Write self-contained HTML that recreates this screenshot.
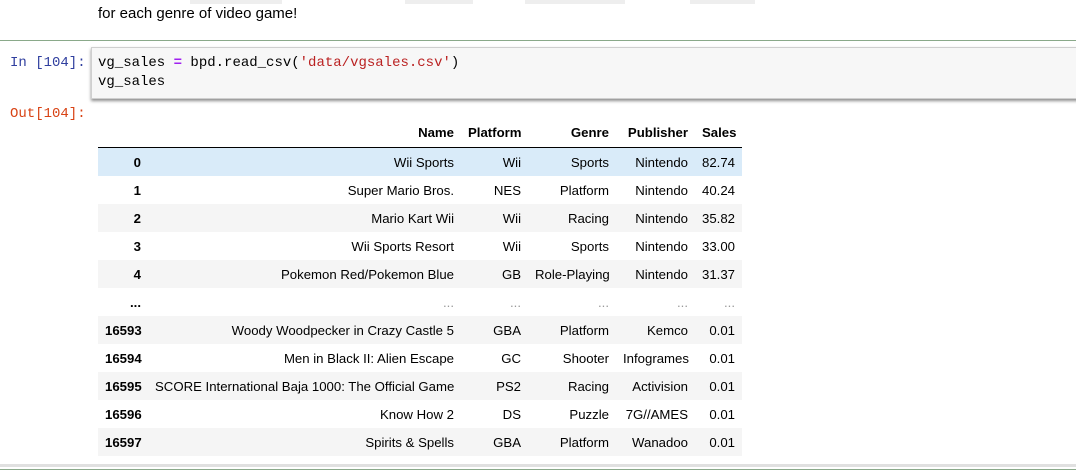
<!DOCTYPE html>
<html><head><style>
body{margin:0;width:1076px;height:476px;background:#fff;position:relative;overflow:hidden;font-family:"Liberation Sans",Arial,sans-serif;}
.abs{position:absolute}
.mono{font-family:"Liberation Mono",monospace;font-size:14px}
table{position:absolute;left:98px;top:118px;width:644px;border-collapse:collapse;font-size:13.2px;color:#000;table-layout:fixed}
td,th{text-align:right;padding:0 7px;height:28px;white-space:nowrap;overflow:visible}
thead th{height:29px;border-bottom:1px solid #000}
tbody tr:nth-child(odd){background:#f5f5f5}
tbody tr.sel{background:#d9ebf9}
.ell{color:#999}
</style></head><body>
<div class="abs" style="left:190px;top:0;width:92px;height:4px;background:#eee"></div>
<div class="abs" style="left:405px;top:0;width:68px;height:4px;background:#eee"></div>
<div class="abs" style="left:525px;top:0;width:100px;height:4px;background:#eee"></div>
<div class="abs" style="left:690px;top:0;width:65px;height:4px;background:#eee"></div>
<div class="abs" style="left:98px;top:5px;font-size:15px;color:#000">for each genre of video game!</div>
<div class="abs" style="left:0;top:40px;width:1076px;height:1px;background:#8aa98a"></div>
<div class="abs mono" style="left:10px;top:55px;color:#303F9F">In [104]:</div>
<div class="abs" style="left:91px;top:47px;width:990px;height:50px;background:#f7f7f7;border:1px solid #cfcfcf;box-shadow:0 2px 3px rgba(0,0,0,.45)"></div>
<div class="abs mono" style="left:98px;top:54px;line-height:19px;color:#000">vg_sales <span style="color:#a020f0;font-weight:bold">=</span> bpd.read_csv(<span style="color:#ba2121">'data/vgsales.csv'</span>)<br>vg_sales</div>
<div class="abs mono" style="left:10px;top:106px;color:#D84315">Out[104]:</div>
<table>
<colgroup><col style="width:50px"><col style="width:313px"><col style="width:67px"><col style="width:88px"><col style="width:79px"><col style="width:47px"></colgroup>
<thead><tr><th></th><th>Name</th><th>Platform</th><th>Genre</th><th>Publisher</th><th>Sales</th></tr></thead>
<tbody>
<tr class="sel"><th>0</th><td>Wii Sports</td><td>Wii</td><td>Sports</td><td>Nintendo</td><td>82.74</td></tr>
<tr style="background:#fff"><th>1</th><td>Super Mario Bros.</td><td>NES</td><td>Platform</td><td>Nintendo</td><td>40.24</td></tr>
<tr><th>2</th><td>Mario Kart Wii</td><td>Wii</td><td>Racing</td><td>Nintendo</td><td>35.82</td></tr>
<tr style="background:#fff"><th>3</th><td>Wii Sports Resort</td><td>Wii</td><td>Sports</td><td>Nintendo</td><td>33.00</td></tr>
<tr><th>4</th><td>Pokemon Red/Pokemon Blue</td><td>GB</td><td>Role-Playing</td><td>Nintendo</td><td>31.37</td></tr>
<tr style="background:#fff"><th>...</th><td class="ell">...</td><td class="ell">...</td><td class="ell">...</td><td class="ell">...</td><td class="ell">...</td></tr>
<tr><th>16593</th><td>Woody Woodpecker in Crazy Castle 5</td><td>GBA</td><td>Platform</td><td>Kemco</td><td>0.01</td></tr>
<tr style="background:#fff"><th>16594</th><td>Men in Black II: Alien Escape</td><td>GC</td><td>Shooter</td><td>Infogrames</td><td>0.01</td></tr>
<tr><th>16595</th><td>SCORE International Baja 1000: The Official Game</td><td>PS2</td><td>Racing</td><td>Activision</td><td>0.01</td></tr>
<tr style="background:#fff"><th>16596</th><td>Know How 2</td><td>DS</td><td>Puzzle</td><td>7G//AMES</td><td>0.01</td></tr>
<tr><th>16597</th><td>Spirits &amp; Spells</td><td>GBA</td><td>Platform</td><td>Wanadoo</td><td>0.01</td></tr>
</tbody></table>
<div class="abs" style="left:0;top:464px;width:1076px;height:3px;background:#e0e0e0"></div>
<div class="abs" style="left:0;top:469px;width:1076px;height:1px;background:#8aa98a"></div>
</body></html>
